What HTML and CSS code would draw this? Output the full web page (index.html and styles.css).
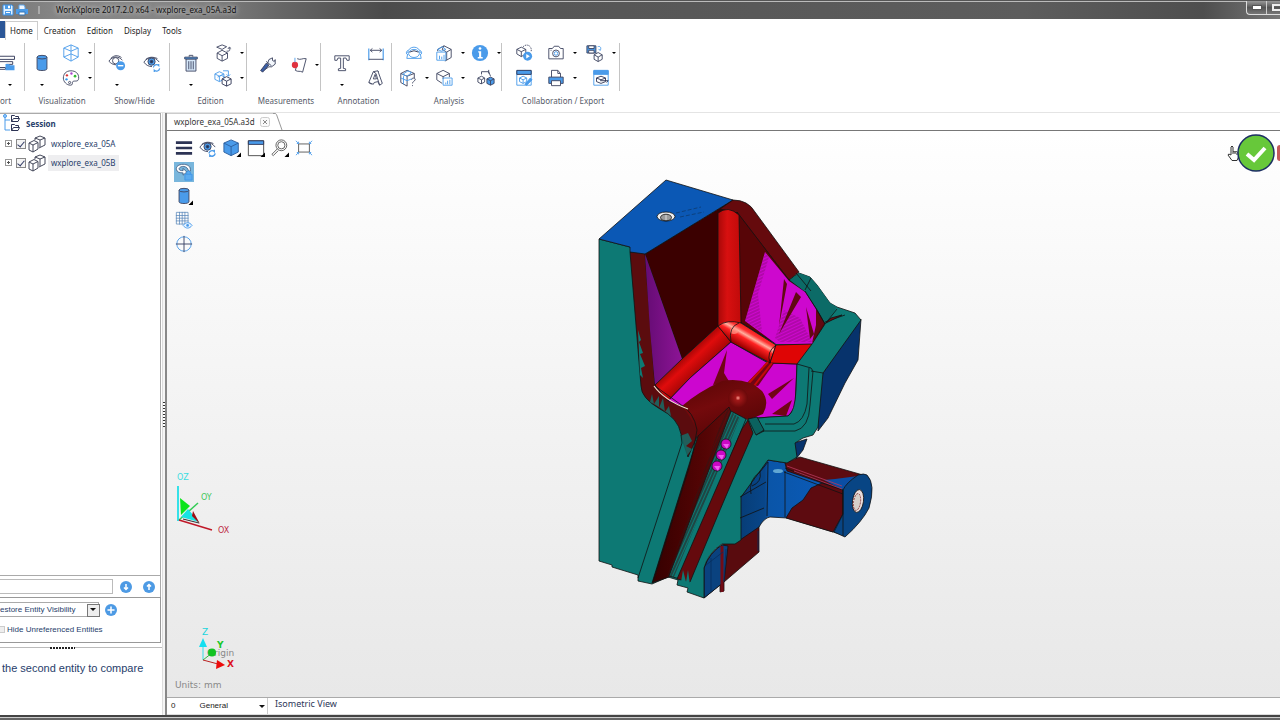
FILE: index.html
```html
<!DOCTYPE html>
<html lang="en">
<head>
<meta charset="utf-8">
<title>WorkXplore</title>
<link rel="stylesheet" href="styles.css">
</head>
<body>
<svg class="defs" aria-hidden="true">
  <defs>
    <symbol id="cube" viewBox="0 0 20 20"><path d="M10 1.500 17 5v9.500L10 18.500 3 14.500V5zM3 5l7 3.500L17 5M10 8.500v10"/></symbol>
    <symbol id="eye" viewBox="0 0 20 20"><path d="M1 9C5 3 13 2 18 9M1 9c2 3 5 5 9 5M3 6C7 3 11 3 16 5"/><circle class="solid" cx="9.500" cy="8.500" r="4"/><circle class="pupil" cx="9.500" cy="8.500" r="1.500"/></symbol>
    <symbol id="cyl" viewBox="0 0 20 20"><path class="solid" d="M4.500 3.500v13c0 2.500 11 2.500 11 0v-13"/><ellipse class="solid" cx="10" cy="3.500" rx="5.500" ry="2"/></symbol>
  </defs>
</svg>
<div class="app">
  <header class="titlebar">
    <button class="quick" aria-label="Save"><svg viewBox="0 0 12 12"><path d="M1 1h9l1 1v9H1z" fill="#dff0ff" stroke="#3a8ee0"/><path d="M3 1h6v4H3zM3 7h6v4H3z" fill="#4a9be8"/><path d="M6.500 2h1v2h-1zM4 8.500h4" fill="#fff" stroke="#fff"/></svg></button>
    <button class="quick" aria-label="Print"><svg viewBox="0 0 12 12"><path d="M3 1h5l1 2v3H3z" fill="#eef6ff" stroke="#5ca5ea"/><path d="M0 5h12v5H0z" fill="#4a9be8"/><path d="M3 8h6v3H3z" fill="#fff" stroke="#3577b8"/></svg></button>
    <span class="tick"></span>
    <span class="title">WorkXplore 2017.2.0 x64 - wxplore_exa_05A.a3d</span>
    <div class="winbtns"><button aria-label="Minimize"><i class="min"></i></button><button aria-label="Maximize"><i class="max"></i></button></div>
  </header>
  <nav class="menu">
    <span class="filetab"></span>
    <button class="tab active">Home</button><button class="tab">Creation</button><button class="tab">Edition</button><button class="tab">Display</button><button class="tab">Tools</button>
  </nav>
  <section class="ribbon">
    <div class="group">
      <div class="tools g-import">
        <button class="tool tall" aria-label="Import"><svg class="icon" viewBox="0 0 20 20"><path d="M-3 2.500h18v3.500H-3zM-3 8.500h16v3h-7M-3 15h8v2h-8" fill="none" stroke="#2c3354"/><path d="M5 11h4l1 1.500h5V18H5z" fill="#4a9bea"/></svg><i class="caret"></i></button>
      </div>
      <div class="label cut">ort</div>
    </div>
    <div class="group">
      <div class="tools g-vis">
        <button class="tool tall" aria-label="Shading"><svg class="icon ln"><use href="#cyl"/></svg><i class="caret"></i></button>
        <button class="tool" aria-label="Wireframe"><svg class="icon bl" viewBox="0 0 20 20"><path d="M10 1 18 4.500v10L10 19l-8-4.500v-10zM2 4.500l8 3.500 8-3.500M10 8v11M2 14.500 10 11l8 3.500M10 1v7"/></svg><i class="caret"></i></button>
        <button class="tool" aria-label="Colors"><svg class="icon ln" viewBox="0 0 20 20"><path d="M10 2C4 2 1.500 6 1.500 10s3.500 8 8 8c3 0 1.500-3 2.500-4 2-1.500 6 1 6.500-3.500C19 5 15 2 10 2z"/><circle cx="5.500" cy="7" r="1.300" fill="#d33" stroke="none"/><circle cx="10.500" cy="5" r="1.300" fill="#a4c" stroke="none"/><circle cx="14.500" cy="8" r="1.500" fill="#3b3" stroke="none"/><circle cx="5" cy="11.500" r="1.300" fill="#39e" stroke="none"/><circle cx="8.500" cy="15" r="1.200"/></svg><i class="caret"></i></button>
      </div>
      <div class="label">Visualization</div>
    </div>
    <div class="group">
      <div class="tools g-show">
        <button class="tool tall" aria-label="Hide"><svg class="icon ln" viewBox="0 0 20 20"><path d="M1 8C5 2 12 2 16 7M1 8c2 2 4 4 8 4M3 5C7 1 11 1 15 4"/><circle cx="8.500" cy="7.500" r="3.500"/><circle cx="14" cy="13" r="5" fill="#4a9bea" stroke="none"/><path d="M11 13h6" stroke="#fff" stroke-width="1.500"/></svg><i class="caret"></i></button>
        <button class="tool tall" aria-label="Invert visibility"><svg class="icon ln" viewBox="0 0 20 20"><use href="#eye"/><path d="M11.500 15a3.500 3.500 0 0 1 6-2v-2M18.500 16a3.500 3.500 0 0 1-6 2v2" stroke="#4a9bea" stroke-width="1.300"/></svg></button>
      </div>
      <div class="label">Show/Hide</div>
    </div>
    <div class="group">
      <div class="tools g-edit">
        <button class="tool tall" aria-label="Delete"><svg class="icon ln" viewBox="0 0 20 20"><path d="M4.500 5.500h11V19h-11z" fill="#d6e8fa"/><path d="M3 3.500h14v2H3z" fill="#4a9bea"/><path d="M8 3V1.500h4V3M7.500 8v9M10 8v9M12.500 8v9"/></svg><i class="caret"></i></button>
        <button class="tool" aria-label="Move"><svg class="icon ln" viewBox="0 0 20 20"><path d="M3.500 10 9 7l6 3v6l-6 3-5.500-3zM3.500 10 9 13l6-3M9 13v6M3 3.500 9 1l5 2-5 3z"/><path d="M14 8c4 0 4-1 3-4M15.500 5.500 17 3.500l2 1.500"/></svg><i class="caret"></i></button>
        <button class="tool" aria-label="Copy"><svg class="icon bl" viewBox="0 0 20 20"><path d="M1 5.500 6 3l5 2.500v6L6 14l-5-2.500zM1 5.500 6 8l5-2.500M6 8v6M10 2h6v6M14 6l2 2 2-2M4 9l4-2 4 2"/><path d="m9 11 5-2.500 5 2.500v5.500L14 19l-5-2.500zM9 11l5 2.500 5-2.500M14 13.500V19" fill="#fff" stroke="#2c3354"/></svg><i class="caret"></i></button>
      </div>
      <div class="label">Edition</div>
    </div>
    <div class="group">
      <div class="tools g-meas">
        <button class="tool tall mid" aria-label="Measure"><svg class="icon ln" viewBox="0 0 20 20"><path d="M7 11 10 7l1-3 4-2v3l2 1 1-2v5l-4 3-3 0-7 5-2-1z" fill="#f4f8fd"/><path d="m2 16 6-8 3 2-7 8zM8 6l6 5" fill="#3b5fa6"/></svg></button>
        <button class="tool tall mid" aria-label="Point on curve"><svg class="icon ln" viewBox="0 0 20 20"><path d="M8 3c4 2 6-1 10 0l-4 15c-3-2-5 0-8-2l1-4"/><circle cx="5.500" cy="10" r="3.500" fill="#e03340" stroke="none"/><path d="M5.500 2v5" stroke="#4a9bea"/></svg><i class="caret"></i></button>
      </div>
      <div class="label">Measurements</div>
    </div>
    <div class="group">
      <div class="tools g-annot">
        <button class="tool tall" aria-label="Text"><svg class="icon ln" viewBox="0 0 20 20"><path d="M2 2h16v5h-2.500L14.500 4.500h-3V16l2.500.5v2H6v-2l2.500-.5V4.500h-3L4.500 7H2z"/></svg><i class="caret"></i></button>
        <button class="tool" aria-label="Dimension"><svg class="icon ln" viewBox="0 0 20 20"><path d="M2 5v13M18 5v13" stroke="#4a9bea" stroke-width="1.300"/><path d="M2 17h16M4 7h12M6 5l-2.500 2L6 9M14 5l2.500 2-2.500 2"/></svg></button>
        <button class="tool" aria-label="3D text"><svg class="icon ln" viewBox="0 0 20 20"><path d="m2 15 5-12 5-1 5 14-3 2-2-4-4 1-1 2zM7 3l3 2 4 13M7 11l2-5 1.500 5zM5 17l-3-2M12 2l1 1"/></svg></button>
      </div>
      <div class="label">Annotation</div>
    </div>
    <div class="group">
      <div class="tools g-ana">
        <button class="tool" aria-label="Bounding"><svg class="icon bl" viewBox="0 0 20 20"><path d="M3 10a7 6.500 0 0 1 14 0M3 7C1 9 1 11 3 12M17 7c2 2 2 4 0 5M3 11l-1 5h16l-1-5"/><ellipse cx="10" cy="10.500" rx="6" ry="4.500"/><path d="M5 9q5-3 10 0" stroke="#2c3354"/></svg></button>
        <button class="tool" aria-label="Statistics"><svg class="icon ln" viewBox="0 0 20 20"><path d="M3 8V6l7-4 8 4v9l-7 4M10 2l-2 4 5 3 5-3M13 9v9"/><path d="M2 9h10v9H2zM5 13v4M7.500 14v3M10 12v5M3 6l5-3 4 3-5 2z" stroke="#4a9bea"/></svg><i class="caret"></i></button>
        <button class="tool" aria-label="Information"><svg class="icon" viewBox="0 0 20 20"><circle cx="10" cy="10" r="9" fill="#4a9bea"/><circle cx="10" cy="5" r="1.500" fill="#fff"/><path d="M8 8h3.300v6.500H13V16H7.500v-1.500H9v-5H8z" fill="#fff"/></svg><i class="caret"></i></button>
        <button class="tool" aria-label="Query"><svg class="icon ln" viewBox="0 0 20 20"><path d="m2 5 7-3.500L17 5v5M2 5v10l7 4M2 5l7 3 8-3M9 8v11M14 12c0-3 5-2 4 0s-3 2-3 4M15 18v1"/><path d="m4 6 6-4 4 2-5 4zM5 8v9M2 10l7 3 5-2" stroke="#4a9bea"/></svg><i class="caret"></i></button>
        <button class="tool" aria-label="Report"><svg class="icon ln" viewBox="0 0 20 20"><path d="m2 5 7-3.500L16 5v4M2 5v7l6 4M2 5l7 3.500L16 5M9 8.500V11"/><path d="M9 10h10v8H9zM12 15v2M14 13v4M16.500 12v5" stroke="#4a9bea"/></svg><i class="caret"></i></button>
        <button class="tool" aria-label="Compare"><svg class="icon ln" viewBox="0 0 20 20"><path d="m1 10 4-2 3.500 2v4.500l-4 2-3.500-2zM1 10l4 2 3.500-2M5 12v4.500M5 6V3h8l2 5M13 1v4"/><path d="m11 11 4-2 4 2v5l-4 2-4-2z" fill="#4a9bea"/><path d="m11 11 4 2 4-2M15 13v5"/></svg></button>
      </div>
      <div class="label">Analysis</div>
    </div>
    <div class="group">
      <div class="tools g-coll">
        <button class="tool" aria-label="Animate"><svg class="icon ln" viewBox="0 0 20 20"><path d="m2 6 5-2.500L12 6v5l-5 3-5-3zM2 6l5 2.500L12 6M7 8.500V14"/><path d="M9 3c4-4 10-1 9 5" stroke-dasharray="1.500 1"/><circle cx="14" cy="13.500" r="5" fill="#4a9bea" stroke="none"/><path d="m12.500 11 4 2.500-4 2.500z" fill="#fff" stroke="none"/></svg></button>
        <button class="tool" aria-label="Snapshot"><svg class="icon ln" viewBox="0 0 20 20"><path d="M2 5h4l2-2.500h5L15 5h3v11.500H2zM4 7h1"/><circle cx="10" cy="10.500" r="3.800"/><circle cx="10" cy="10.500" r="2" stroke="#4a9bea"/></svg><i class="caret"></i></button>
        <button class="tool" aria-label="Save model"><svg class="icon ln" viewBox="0 0 20 20"><path d="M1 2h10v8H1z" fill="#4a9bea"/><path d="M3 2h6v3H3zM3 7h6v3H3z" fill="#fff"/><path d="m9 12 4.500-2.500L18 12v5l-4.500 2.500L9 17zM9 12l4.500 2.500L18 12M13.500 14.500v5"/><path d="M13 3c3-1 4 1 3 4l-2-1" stroke="#4a9bea"/></svg><i class="caret"></i></button>
        <button class="tool" aria-label="Edit scene"><svg class="icon bl" viewBox="0 0 20 20"><path d="M2 2h16v16H2z"/><path d="M2 1.500h16V6H2z" fill="#4a9bea" stroke="#2c3354"/><path d="m5 10 4-2 4 2v4l-4 2-4-2zM5 10l4 2 4-2M9 12v4"/><path d="m11 17 6-7 2 2-6 6z" fill="#4a9bea"/></svg></button>
        <button class="tool" aria-label="Print"><svg class="icon ln" viewBox="0 0 20 20"><path d="M5 9V1.500h7L15 5v4M12 1.500V5h3"/><path d="M2 9h16v7H2z" fill="#4a9bea"/><path d="M5 13h10v5.500H5z" fill="#fff"/></svg><i class="caret"></i></button>
        <button class="tool" aria-label="Export view"><svg class="icon bl" viewBox="0 0 20 20"><path d="M2 2h16v16H2z"/><path d="M2 1.500h16V6H2z" fill="#4a9bea"/><path d="m5 10 5-2 5 2v4l-5 2-5-2zM5 10l5 2 5-2M9 13h9l-2 2" stroke="#2c3354"/></svg></button>
      </div>
      <div class="label">Collaboration / Export</div>
    </div>
  </section>

  <main class="work">
    <aside class="side">
      <div class="tree">
        <div class="root"><svg class="rooticon" viewBox="0 0 22 20"><path d="M5 1v15h5M5 6h5" fill="none" stroke="#4a9bea"/><circle cx="5" cy="2" r="1.500" fill="#9cf" stroke="#4a9bea"/><path d="M11.500 7.500v-6h3l1 1h3v2M11.500 7.500l2-3h6l-1.500 3zM11.500 16.500v-6h3l1 1h3v2M11.500 16.500l2-3h6l-1.500 3z" fill="none" stroke="#2c3354"/></svg><b>Session</b></div>
        <div class="node"><i class="plus"></i><input type="checkbox" id="n1" checked><svg class="nodeicon" viewBox="0 0 20 18"><path d="m2 8 5-2.500 4 2V14l-5 3-4-2zM2 8l4 2 5-2.500M6 10v7M8 5V3l5-2 5 2v7l-6 3M8 3l5 2 5-2M13 5v7"/></svg><label for="n1">wxplore_exa_05A</label></div>
        <div class="node"><i class="plus"></i><input type="checkbox" id="n2" checked><svg class="nodeicon" viewBox="0 0 20 18"><path d="m2 8 5-2.500 4 2V14l-5 3-4-2zM2 8l4 2 5-2.500M6 10v7M8 5V3l5-2 5 2v7l-6 3M8 3l5 2 5-2M13 5v7"/></svg><label for="n2" class="sel">wxplore_exa_05B</label></div>
      </div>
      <div class="search"><input type="text" aria-label="Search"><button class="round" aria-label="Next"><svg viewBox="0 0 12 12"><circle cx="6" cy="6" r="6" fill="#4d9ae4"/><path d="M6 3v5M4 6.500l2 2 2-2" fill="none" stroke="#fff" stroke-width="1.500"/></svg></button><button class="round" aria-label="Previous"><svg viewBox="0 0 12 12"><circle cx="6" cy="6" r="6" fill="#4d9ae4"/><path d="M6 9V4M4 5.500l2-2 2 2" fill="none" stroke="#fff" stroke-width="1.500"/></svg></button></div>
      <div class="filters">
        <div class="combo"><select aria-label="Visibility"><option>estore Entity Visibility</option></select><button class="round" aria-label="Add"><svg viewBox="0 0 12 12"><circle cx="6" cy="6" r="6" fill="#4d9ae4"/><path d="M6 2.500v7M2.500 6h7" fill="none" stroke="#fff" stroke-width="1.500"/></svg></button></div>
        <div class="hide"><input type="checkbox" id="hu"><label for="hu">Hide Unreferenced Entities</label></div>
      </div>
      <div class="hgrip"><i></i></div>
      <p class="message">the second entity to compare</p>
    </aside>
    <div class="vgrip"><i></i></div>
    <section class="doc">
      <div class="doctabs"><div class="doctab"><span>wxplore_exa_05A.a3d</span><button aria-label="Close document"><svg viewBox="0 0 10 10"><rect x=".5" y=".5" width="9" height="9" rx="2" fill="#fafafa" stroke="#ccc"/><path d="m3 3 4 4M7 3 3 7" stroke="#888"/></svg></button></div><svg class="slant" viewBox="0 0 9 17"><path d="M0 .5h2q1 0 1.500 1L9 17" fill="none" stroke="#999"/></svg></div>
      <div class="view">
        <div class="viewbar">
          <button aria-label="Menu"><svg viewBox="0 0 20 20"><path d="M1 4h18M1 10h18M1 16h18" stroke="#2c3354" stroke-width="3"/></svg></button>
          <button aria-label="Visibility"><svg class="ln" viewBox="0 0 20 20"><use href="#eye"/><path d="M11 16a3.500 3.500 0 0 1 6-2v-2M18 16a3.500 3.500 0 0 1-6 2v2" stroke="#4a9bea" stroke-width="1.500"/></svg></button>
          <button aria-label="View cube"><svg viewBox="0 0 20 20"><path d="m9 1 8 3.500v10L9 18.500 1 14.500v-10z" fill="#4a9bea" stroke="#2c5d9d"/><path d="m1 4.500 8 4 8-4M9 8.500v10" fill="none" stroke="#2c5d9d"/><path d="M20 15v5h-5z"/></svg></button>
          <button aria-label="Window"><svg viewBox="0 0 20 20"><path d="M1.500 2h17v16.500h-17z" fill="#fff" stroke="#444"/><path d="M1.500 2h17v4h-17z" fill="#4a9bea" stroke="#2c3354"/><path d="M20 15v5h-5z"/></svg></button>
          <button aria-label="Zoom"><svg class="gr" viewBox="0 0 20 20"><circle cx="11.500" cy="7" r="6"/><circle cx="11.500" cy="7" r="4"/><path d="m7 11-6 6 1.500 1.500L8 13"/><path d="M20 15v5h-5z" fill="#000" stroke="none"/></svg></button>
          <button aria-label="Fit"><svg class="gr" viewBox="0 0 20 20"><path d="M4 5.500h12v9H4z"/><path d="m1 2 3 3M19 2l-3 3M1 18l3-3M19 18l-3-3M2 5h2V3M18 5h-2V3M2 15h2v2M18 15h-2v2" stroke="#4a9bea"/></svg></button>
        </div>
        <div class="sidebar">
          <button class="on" aria-label="Rotate lock"><svg viewBox="0 0 20 20"><path d="M17 9C18 3 13 1.500 9 1.500 4 1.500 1 4 1.500 7 2 10 5 11 9 11v2.500l4-3.500-4-4v2.500C6 8.500 4.500 8 4.500 6.500 5 3 14 2 15 9z" fill="#fff" stroke="#2c4a74" stroke-width=".8"/><path d="M11 12.500h8V19h-8zM13 12.500V10q2-2.500 4 0v2.500" fill="#5cabef" stroke="#3e95e6"/></svg></button>
          <button aria-label="Render mode"><svg class="ln" viewBox="0 0 20 20"><use href="#cyl"/><path d="M20 15v5h-5z" fill="#000" stroke="none"/></svg></button>
          <button aria-label="Grid"><svg viewBox="0 0 20 20"><path d="M1.500 1.500h13v13h-13zM5 1v14M8 1v14M11 1v14M1 5h14M1 8h14M1 11h14" fill="none" stroke="#5585b8" stroke-width=".8"/><path d="M9 16c3-4 7-4 10 0-3 4-7 4-10 0z" fill="#e5f2ff" stroke="#4a9bea"/><circle cx="14" cy="16" r="1.500" fill="#4a9bea"/></svg></button>
          <button aria-label="Center"><svg viewBox="0 0 20 20"><circle cx="10" cy="10" r="8" fill="none" stroke="#4a9bea"/><path d="M1 10h18M10 1v18" stroke="#333c60"/></svg></button>
        </div>
        <svg class="model" viewBox="595 175 280 430" role="img" aria-label="Machined part">
          <defs>
            <linearGradient id="rv" x1="0" x2="1"><stop offset="0" stop-color="#a80808"/><stop offset=".4" stop-color="#d81010"/><stop offset="1" stop-color="#c00a0a"/></linearGradient>
            <linearGradient id="rd" gradientUnits="userSpaceOnUse" x1="690" y1="350" x2="705" y2="366"><stop offset="0" stop-color="#a00606"/><stop offset=".4" stop-color="#e00c0c"/><stop offset="1" stop-color="#a80606"/></linearGradient>
            <linearGradient id="rh" gradientUnits="userSpaceOnUse" x1="760" y1="329" x2="748" y2="350"><stop offset="0" stop-color="#d00"/><stop offset=".35" stop-color="#f33"/><stop offset=".5" stop-color="#ffb0a0"/><stop offset=".65" stop-color="#f22"/><stop offset="1" stop-color="#a00000"/></linearGradient>
            <linearGradient id="pu" x1="0" x2="1"><stop offset="0" stop-color="#650c74"/><stop offset="1" stop-color="#8d1496"/></linearGradient>
            <linearGradient id="ch" x1="0" x2="1"><stop offset="0" stop-color="#350000"/><stop offset=".6" stop-color="#520404"/><stop offset="1" stop-color="#630b0b"/></linearGradient>
            <linearGradient id="bl" x1="0" x2="1"><stop offset="0" stop-color="#073d76"/><stop offset=".24" stop-color="#08468a"/><stop offset=".28" stop-color="#0a55a8"/><stop offset="1" stop-color="#0b5cbc"/></linearGradient>
            <linearGradient id="pipe" x1="0" y1="0" x2=".4" y2="1"><stop offset="0" stop-color="#560505"/><stop offset=".4" stop-color="#740a0c"/><stop offset="1" stop-color="#490303"/></linearGradient>
            <radialGradient id="ball"><stop offset="0" stop-color="#ff9a90"/><stop offset=".25" stop-color="#a01818"/><stop offset="1" stop-color="#680809"/></radialGradient>
            <pattern id="hatch" width="4" height="3" patternUnits="userSpaceOnUse" patternTransform="rotate(-25)"><path d="M0 1h4" stroke="#7a0764" stroke-width=".7"/></pattern>
            <pattern id="ribs" width="3" height="5" patternUnits="userSpaceOnUse" patternTransform="rotate(24)"><path d="M1 0v5" stroke="#301313" stroke-width="1"/></pattern>
          </defs>
          <g stroke="#111" stroke-width=".8" stroke-linejoin="round">
            <path d="M823 373 858 322 861 319 858 360 845 383 828 418 818 431 818 390z" fill="#07336c"/>
            <path d="M704 598 704 568Q710 552 722 545L759 525V552L724 582V591L720 592V585z" fill="#590b0e"/>
            <path d="M704 598V568Q710 552 722 545L728 546 724 582z" fill="#0a427f"/>
            <path d="M722 546v46" stroke="#720c16" stroke-width="3"/><path d="M706 565 723 552M711 558v34M726 549l-2 32M758 531v20" fill="none" stroke="#062d5e"/>
            <path d="M794 443 807 439 803 450 796 459z" fill="#07336c"/>
            <path d="M740 498 768 460 787 463 800 465 843 490V535L787 518 770 517Q764 518 759 527L740 540z" fill="url(#bl)"/>
            <path d="M785 463 800 457 863 475 843 490 787 471z" fill="#5d0b10"/>
            <path d="M786 518 792 508 803 500 811 488 822 483 843 490V514L833 532z" fill="#5d0b10"/>
            <path d="M824 480 835 479 858 476 843 490z" fill="#0b4ea4" stroke="none"/>
            <path d="M843 490Q846 483 858 475 864 473 867 475 876 484 869 508 862 522 845 537L834 532 843 514z" fill="#084584"/>
            <path d="M843 490V536M785 468 843 490M784 472 843 494M785 471v46M768 462 767 516" fill="none"/>
            <path d="M787 466 842 486M794 471 842 489" stroke="#b83a60" fill="none" stroke-width=".8"/>
            <ellipse cx="858" cy="501" rx="5.500" ry="11.500" transform="rotate(8 858 501)" fill="#e8dcda"/>
            <ellipse cx="857" cy="502" rx="3.500" ry="8.500" transform="rotate(8 857 502)" fill="#d6cfc9" stroke="#842626" stroke-dasharray="2 1"/>
            <path d="M599 239 630 247 733 210 789 280 799 273 810 277 817 285 830 303 837 307 855 313 861 320 823 373 818 427 813 435 803 438 795 443 797 457 787 463 768 460 741 497V540L735 544H722Q708 553 704 568V598L687 592 688 588 677 585 678 580 668 577 652 584 638 581 638 575 612 567V565L599 561z" fill="#0d7974"/>
            <path d="M789 280 799 273 810 277 817 285 830 303 837 307 825 324 817 310 805 291z" fill="#0c6b67" stroke="none"/>
            <path d="M630 252 645 253 655 385 684 405 700 430 688 457Q683 443 681 434 678 418 660 409 641 398 641 386z" fill="#5b0c0e"/>
            <path d="m650 402 2-8 2 10 5-8v12l4-10 2 14 4-6 2 10q-12-10-21-14zM680 436l8-3 4 8-6 5 6 3-6 8z" fill="#0d7974" stroke="none" opacity=".75"/>
            <path d="M638 330l3 10-2 2 4 11-3 1 5 12-4 2 2 10-3-3z" fill="#0d7974" stroke="none"/>
            <path d="M645 254 733 200 741 215V323L718 326 682 359z" fill="#3b0000"/>
            <path d="M599 239 666 180 733 200 645 254 630 252 630 247z" fill="#0b58b5"/>
            <path d="M720 209 733 200Q748 200 755 212L799 272 789 280 737 213z" fill="#650a0d"/>
            <path d="M645 254 682 359 655 385 650 330z" fill="url(#pu)" stroke="none"/>
            <path d="M737 212 789 280 805 292 817 310 825 324 812 344H776L740 322z" fill="#570507"/>
            <path d="M765 252 789 281 805 292 816 309 818 327 812 344H776L745 321z" fill="#cd08ce" stroke="none"/>
            <path d="M745 321 765 252 769 257 758 294 762 332zM775 338 784 310 800 318 812 342H780z" fill="url(#hatch)" stroke="none"/>
            <path d="M784 279 787 284 779 326zM796 292 801 297 779 334zM806 307 814 334 810 339zM816 310 824 323 812 343 816 325z" fill="#610812" stroke="none"/>
            <path d="M718 213Q728 205 739 215L741 323 718 326z" fill="url(#rv)"/>
            <path d="M655 385 682 359 718 326 731 342 690 378 668 401z" fill="url(#rd)"/>
            <path d="M731 342 768 363 797 364 795 408 788 416 740 419 690 409 668 401 690 378z" fill="#cc06cf"/>
            <path d="M727 350 724 373 730 383 713 385zM768 361 775 362 758 386 746 384zM794 378 768 394 772 399zM792 400 786 416 772 414z" fill="#710515" stroke="none"/>
            <path d="M718 326Q727 319 741 323L776 345 770 363 731 342z" fill="url(#rh)"/>
            <path d="M776 345 812 344 797 364 770 363z" fill="#df0505"/><path d="M768 362 748 384M772 363 754 386" stroke="#c40a0a" stroke-width="2"/>
            <ellipse cx="734" cy="331" rx="4" ry="3" fill="#ff9c8c" stroke="none" opacity=".7"/><path d="M731 342Q728 327 739 323M770 363Q766 352 776 345" fill="none"/>
            <path d="M682 406Q698 392 722 381 748 377 762 391 770 402 763 414L748 420 740 416 697 458Q703 431 682 406z" fill="url(#pipe)" stroke="none"/>
            <path d="M698 436 729 407 733 418 669 577 652 583z" fill="url(#ch)"/>
            <path d="M731 411 746 419 680 579 669 576z" fill="#0d7974"/>
            <path d="M726 408 740 418 674 577 667 577z" fill="url(#ribs)" stroke="none"/>
            <path d="M748 420 753 433 740 463 720 510 690 582 677 579 742 429z" fill="#650a0d"/>
            <path d="M681 582 683 570 686 582 688 570 690 585z" fill="#0d7974" stroke="none"/>
            <path d="M681 435 682 443 638 578M693 452 689 468 653 582M655 386 680 404Q694 412 697 430L693 452" fill="none"/>
            <path d="M654 386Q664 400 688 409" fill="none" stroke="#f3ddcb" stroke-width="1.200"/>
            <circle cx="738" cy="398" r="10" fill="url(#ball)" stroke="none"/>
            <path d="M748 419 770 417 788 416Q795 412 796 390L797 364 811 368 808 410Q806 427 794 433H762L753 430z" fill="#0d7974" stroke="none"/>
            <path d="M748 419 770 417 788 416Q795 412 796 390L797 364M811 368 813 371 810 405Q809 428 795 431H762M809 368 807 404Q804 421 794 424H765M757 418 764 431 756 435M797 364 811 368M811 371 823 373M805 291 817 310 825 324 837 309M796 273 811 291M811 278 805 290M825 322 845 315" fill="none"/>
            <path d="M748 419 757 417 764 430 756 435z" fill="#0b625f"/>
            <path d="M826 323 842 315 831 318z" fill="#700c12"/>
            <path d="M751 494Q748 480 760 472L768 462M740 497 766 482M740 518 764 508M752 486Q762 482 760 472" fill="none"/>
            <ellipse cx="778" cy="471" rx="5" ry="2" fill="#7bd" stroke="none" opacity=".8"/>
            <ellipse cx="666" cy="216.500" rx="9" ry="4.500" fill="#eee"/><ellipse cx="666" cy="217.500" rx="5.500" ry="3.300" fill="#9b9b9b"/><path d="M666 215v5" stroke="#eee"/>
            <path d="M676 213 701 207M680 217 704 212" stroke="#0d3766" stroke-width=".7" stroke-dasharray="4 2"/>
            <g fill="#cb08c6"><circle cx="726" cy="444" r="5"/><circle cx="721" cy="455" r="5"/><circle cx="717" cy="466" r="5"/></g>
            <path d="M723 444h6l-2 5zM718 455h6l-2 5zM714 466h6l-2 5z" fill="#f05cf0" stroke="none"/>
          </g>
        </svg>
        <svg class="axes" viewBox="172 470 65 65">
          <path d="M178 486v35" stroke="#36e1e8" stroke-width="2"/><path d="M179 520 198 503" stroke="#3c5" stroke-width="1.500"/><path d="M179 520 212 530" stroke="#c01828" stroke-width="1.500"/>
          <path d="M180 498 190 506 181 515z" fill="#0be41b"/><path d="M188 509 199 522 181 517z" fill="#18e3e3"/><path d="M193 511 200 524 192 516z" fill="#9d1015"/><path d="M183 519 199 523" stroke="#333"/>
          <text x="177" y="480" fill="#3cdce0">OZ</text><text x="201" y="500" fill="#44c85a">OY</text><text x="218" y="533" fill="#bd2a42">OX</text>
        </svg>
        <svg class="origin" viewBox="195 625 45 47">
          <path d="M203 660V642" stroke="#36dce8"/><path d="M199 647 203 638 207 647z" fill="#12dff0"/><path d="M203 660 212 653" stroke="#3b4"/><path d="M203 660 218 664" stroke="#b22"/><path d="M216 669 217 660 225 665z" fill="#ed0b0b"/>
          <text class="grey" x="207" y="656">Origin</text><circle cx="212" cy="652.500" r="4" fill="#12c322"/>
          <text x="202" y="635" fill="#16d4dc">Z</text><text class="bold" x="217" y="648" fill="#18c828">Y</text><text class="bold" x="227" y="667" fill="#dc1020">X</text>
        </svg>
        <span class="units">Units: mm</span>
        <div class="confirm">
          <svg class="hand" viewBox="0 0 12 16"><path d="M4 10V2q1-2 2 0v5q1-1 2 0 1-1 2 0 1 0 1.500 1v4L10 15.500H5L1 10q0-2 3 0z" fill="#fff" stroke="#333"/><path d="M6 7v2M8 7v2M10 8v2" stroke="#333"/></svg>
          <button aria-label="Accept"><svg viewBox="0 0 38 38"><circle cx="19" cy="19" r="18" fill="#67c83a" stroke="#1c2f63" stroke-width="1.500"/><path d="m10 20 7 6 11-12" fill="none" stroke="#fff" stroke-width="4"/></svg></button>
          <button class="reject" aria-label="Cancel"></button>
        </div>
      </div>
      <footer class="status"><div class="layer"><span>0</span><select aria-label="Layer"><option>General</option></select></div><span class="iso">Isometric View</span></footer>
    </section>
  </main>
  <div class="frame"></div>
</div>
</body>
</html>
```

FILE: styles.css
```css
* { box-sizing: border-box; }
body { margin: 0; overflow: hidden; font: 8px/12px "Noto Sans", "Open Sans", sans-serif; color: #2c3658; background: #fff; }
button { border: 0; padding: 0; margin: 0; background: none; font: inherit; color: inherit; display: inline-flex; align-items: center; justify-content: center; }
input, select { font: inherit; color: inherit; margin: 0; }
svg { display: block; overflow: visible; }
.defs { position: absolute; width: 0; height: 0; }
.app { height: 100vh; display: flex; flex-direction: column; }

.titlebar { flex: none; height: 19px; display: flex; align-items: center; gap: 2px; padding-left: 2px; border-top: 1px solid #555; box-shadow: inset 0 1px #bbb; background: linear-gradient(90deg, #777 0, #888 5%, #848484 15%, #666 22%, #4b4b4b 30%, #555 38%, #5d5d5d 80%, #4e4e4e 94%, #777 100%); }
.quick svg { width: 12px; height: 12px; }
.tick { width: 2px; height: 8px; margin-left: 8px; background: #aaa; }
.title { margin-left: 14px; color: #111; text-shadow: 0 0 4px #ccc, 0 0 6px #bbb; white-space: nowrap; }
.winbtns { margin-left: auto; display: flex; align-self: flex-start; height: 14px; border: 1px solid #ddd; border-top: 0; border-right: 0; border-radius: 0 0 0 4px; background: linear-gradient(#999, #555 50%, #777); }
.winbtns button { width: 20px; border-right: 1px solid #ccc; }
.winbtns button + button { width: 13px; border: 0; justify-content: flex-end; }
.min { width: 8px; height: 3px; background: #fff; border: 1px solid #555; box-sizing: content-box; }
.max { width: 8px; height: 7px; border: 2px solid #eee; border-right: 0; }

.menu { flex: none; height: 21px; display: flex; align-items: stretch; padding-top: 2px; }
.filetab { width: 5px; background: #2b5697; margin-bottom: 2px; }
.tab { padding: 0 5px 0 6px; color: #222; }
.tab.active { padding: 0 4px; border: 1px solid #ccc; border-bottom: 0; }

.ribbon { flex: none; display: flex; height: 72px; }
.group { display: flex; flex-direction: column; }
.tools { height: 52px; display: grid; grid-template-rows: 25px 25px; justify-items: center; align-items: center; background: linear-gradient(#c4c4c4, #c4c4c4) right 3px / 1px 48px no-repeat; padding-right: 1px; }
.label { padding: 3px 0 0 4px; text-align: center; color: #555a68; white-space: nowrap; }
.label.cut { text-align: left; padding-left: 0; }
.g-import { grid-template-columns: 20px; width: 25px; }
.g-vis { grid-template-columns: 20px 31px; column-gap: 9px; width: 70px; padding-left: 7px; }
.g-show { grid-template-columns: 20px 20px; column-gap: 15px; width: 75px; padding-left: 12px; }
.g-edit { grid-template-columns: 20px 31px; column-gap: 12px; width: 77px; padding-left: 11px; }
.g-meas { grid-template-columns: 20px 31px; column-gap: 10px; width: 74px; padding-left: 11px; }
.g-annot { grid-template-columns: 20px 20px; column-gap: 14px; width: 71px; padding-left: 11px; }
.g-ana { grid-template-columns: 31px 31px 31px; column-gap: 5px; width: 110px; padding-left: 6px; }
.g-coll { grid-template-columns: 28px 31px 31px; column-gap: 8px; width: 118px; padding-left: 8px; }
.tool { gap: 7px; }
.tool.tall { grid-row: 1 / 3; flex-direction: column; height: 50px; gap: 11px; justify-content: flex-start; padding-top: 13px; }
.tool.tall.mid { flex-direction: row; gap: 6px; padding: 0; }
.icon { width: 20px; height: 20px; flex: none; padding: 1px; }
.ln { fill: none; stroke: #3d4460; }
.bl { fill: none; stroke: #4a9bea; }
.gr { fill: none; stroke: #555; }
.solid { fill: #4a9bea; }
.pupil { fill: #1d335c; }
.caret { border: 2px solid transparent; border-top-color: #000; border-bottom: 0; flex: none; }

.work { flex: 1; min-height: 0; display: flex; border-top: 1px solid #e4e4e4; }
.side { width: 162px; flex: none; display: flex; flex-direction: column; color: #27406b; }
.tree { flex: 1; border: solid #aaa; border-width: 1px 1px 1px 0; margin-right: 1px; }
.root { display: flex; align-items: center; height: 20px; gap: 4px; }
.rooticon { width: 22px; height: 20px; }
.node { display: flex; align-items: center; height: 19px; padding-left: 5px; }
.plus { width: 7px; height: 7px; border: 1px solid #999; background: linear-gradient(#555, #555) center / 3px 1px no-repeat, linear-gradient(#555, #555) center / 1px 3px no-repeat; margin-right: 4px; }
.node input { appearance: none; width: 10px; height: 10px; border: 1px solid #888; background: #f4f4f4; display: grid; place-items: center; }
.node input::after { content: ""; width: 3px; height: 6px; border: solid #333c66; border-width: 0 1px 1px 0; transform: rotate(40deg); }
.nodeicon { width: 20px; height: 18px; margin: 0 1px; fill: none; stroke: #44485a; }
.node label { padding: 2px 3px; }
.node .sel { background: #eeeef0; }
.search { height: 21px; flex: none; margin-right: 1px; border-right: 1px solid #aaa; display: flex; align-items: center; padding-right: 5px; }
.search input { width: 113px; height: 15px; border: 1px solid #bbb; border-left: 0; margin-right: 7px; }
.round svg { width: 12px; height: 12px; }
.round + .round { margin-left: 11px; }
.filters { flex: none; height: 46px; margin-right: 1px; border: solid #999; border-width: 1px 1px 1px 0; font-family: "Liberation Sans", Arial, sans-serif; padding-top: 4px; }
.combo, .layer { position: relative; display: flex; align-items: center; }
.combo { gap: 6px; }
.combo select { appearance: none; width: 99px; height: 15px; border: 1px solid #aaa; border-left: 0; border-radius: 0; padding: 0; background: #fff; }
.combo::before { content: ""; position: absolute; left: 87px; top: 2px; width: 11px; height: 11px; border: 1px solid #777; background: #eee; pointer-events: none; }
.layer::after, .combo::after { content: ""; position: absolute; top: 7px; border: 3px solid transparent; border-top-color: #111; border-bottom: 0; pointer-events: none; }
.layer::after { right: 2px; }
.combo::after { left: 90px; top: 6px; }
.hide { display: flex; align-items: center; gap: 2px; height: 25px; }
.hide input { appearance: none; width: 5px; height: 7px; border: 1px solid #ccc; border-left: 0; background: #eee; }
.hgrip { height: 6px; flex: none; display: grid; justify-items: center; align-items: end; padding-right: 38px; background: linear-gradient(#bbb, #bbb) 0 4px / 100% 1px no-repeat; }
.hgrip i { width: 25px; height: 2px; background: repeating-linear-gradient(90deg, #222 0 2px, #fff 2px 3px); }
.message { flex: none; height: 66px; margin: 0; padding: 11px 0 0 2px; font: 11px/16px "Liberation Sans", Arial, sans-serif; white-space: nowrap; }
.vgrip { width: 5px; flex: none; border-left: 1px solid #ddd; border-right: 2px solid #888; display: grid; place-items: center; background: #f5f5f5; }
.vgrip i { width: 2px; height: 25px; background: repeating-linear-gradient(#333 0 1px, #fff 1px 3px); }

.doc { flex: 1; min-width: 0; display: flex; flex-direction: column; }
.doctabs { height: 18px; flex: none; display: flex; align-items: flex-end; border-bottom: 1px solid #777; }
.doctab { height: 17px; display: flex; align-items: center; gap: 5px; padding: 0 3px 0 7px; border-top: 1px solid #ccc; color: #333; }
.doctab svg { width: 10px; height: 10px; }
.doctabs .slant { width: 9px; height: 17px; }
.view { position: relative; flex: 1; min-height: 0; overflow: hidden; background: linear-gradient(#fff, #f4f4f4 45%, #e8e8e8); }
.viewbar { display: flex; gap: 4px; padding: 7px 0 0 7px; }
.viewbar svg, .sidebar svg { width: 20px; height: 20px; padding: 1px; }
.sidebar { display: flex; flex-direction: column; align-items: flex-start; gap: 4px; padding: 4px 0 0 7px; }
.sidebar .on { background: #79b6dc; }
.model { position: absolute; left: 428px; top: 44px; width: 280px; height: 430px; }
.axes { position: absolute; left: 5px; bottom: 162px; width: 65px; height: 65px; font: 8px "DejaVu Sans", sans-serif; }
.origin { position: absolute; left: 28px; bottom: 25px; width: 45px; height: 47px; font: 9px "DejaVu Sans", sans-serif; }
.origin .grey { fill: #888; }
.origin .bold { font-weight: bold; }
.units { position: absolute; left: 8px; bottom: 6px; font: 9px/12px "DejaVu Sans", sans-serif; color: #888; }
.confirm { position: absolute; right: 0; top: 3px; display: flex; align-items: center; }
.confirm svg { width: 38px; height: 38px; }
.confirm .hand { width: 12px; height: 16px; margin-right: -2px; }
.confirm .reject { width: 3px; height: 16px; margin-left: 2px; background: #c45a5a; border-radius: 8px 0 0 8px; }
.status { height: 18px; flex: none; display: flex; border-top: 1px solid #aaa; border-bottom: 1px solid #ddd; background: #fff; }
.layer { width: 101px; padding-left: 4px; gap: 20px; border-right: 1px solid #ccc; color: #222; font-family: "Liberation Sans", Arial, sans-serif; }
.layer select { appearance: none; flex: 1; border: 0; padding: 0 0 0 4px; border-radius: 0; background: none; }
.iso { padding-left: 7px; font-size: 9px; line-height: 12px; }
.frame { flex: none; height: 5px; background: linear-gradient(#444 0 2px, #ccc 2px 3px, #666 3px); }
```
